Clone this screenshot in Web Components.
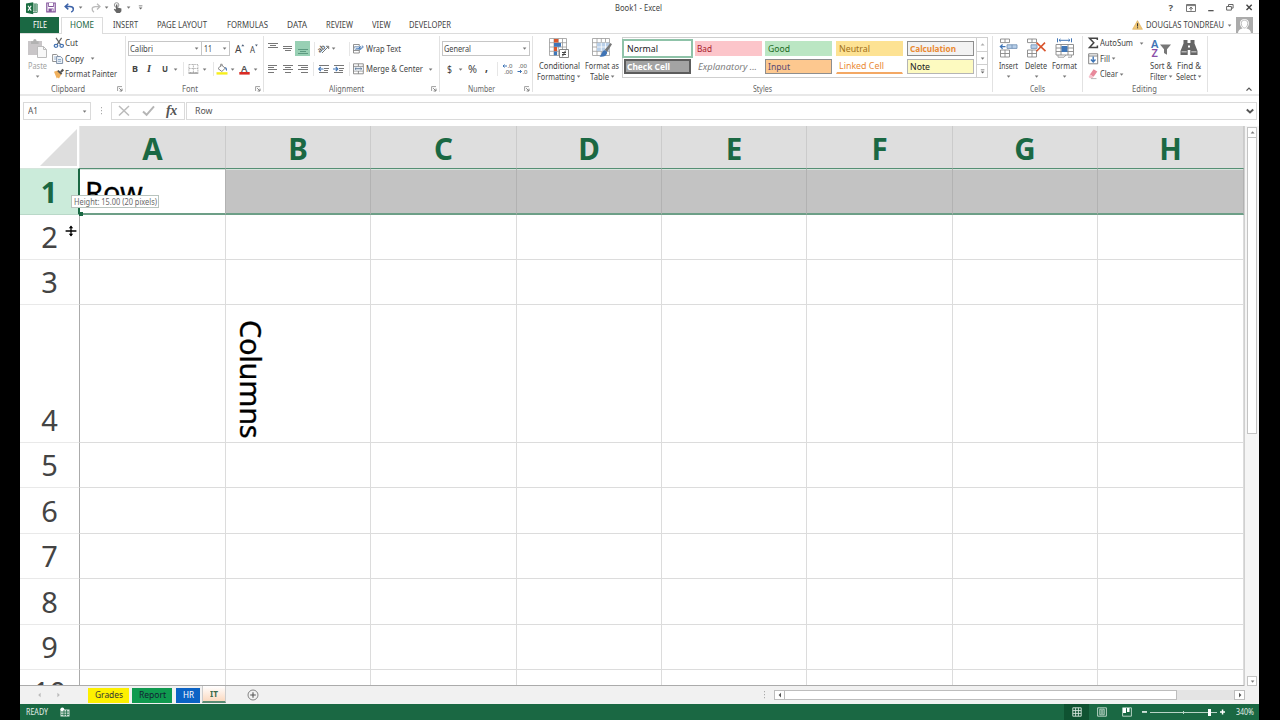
<!DOCTYPE html>
<html lang="en">
<head>
<meta charset="utf-8">
<title>Book1 - Excel</title>
<style>
  html, body { margin: 0; height: 100%; background: #000; overflow: hidden; }
  body { font: 8.4px/10px "Noto Sans", "Open Sans", sans-serif; color: #444; }
</style>
</head>
<body>
<xl-window>
  <xl-titlebar slot="title">Book1 - Excel</xl-titlebar>
  <xl-tabs slot="tabs"></xl-tabs>
  <xl-ribbon slot="ribbon"></xl-ribbon>
  <xl-formula slot="formula"></xl-formula>
  <xl-sheet slot="sheet"></xl-sheet>
  <xl-sheettabs slot="sheettabs"></xl-sheettabs>
  <xl-status slot="status"></xl-status>
</xl-window>

<script>
'use strict'

// small helpers
const define = (name, css, html, ready) => customElements.define(name,
  class extends HTMLElement {
    connectedCallback() {
      if (this.shadowRoot) return
      const t = document.createElement('template')
      t.innerHTML = `<style>* { box-sizing: border-box; } ${css}</style>` + (typeof html === 'function' ? html(this) : html)
      this.attachShadow({mode: 'open'}).appendChild(document.importNode(t.content, true))
      if (ready) ready(this)
    }
  }
)
const ml = (n) => n ? `margin-left:${n}px;` : ''
const icon = (name, left, extra = '') => `<xl-icon name="${name}" style="${ml(left)}${extra}"></xl-icon>`
const label = (text, w, left, extra = '') => `<xl-label w="${w}" style="${ml(left)}${extra}">${text}</xl-label>`
const caret = (left, extra = '') => icon('caret', left, extra)
const sep = (left) => `<xl-sep style="${ml(left)}"></xl-sep>`


// ---- icons: name: [width, height, svg body] ----

const lines = (rows, c = '#777') => rows.map(([x, y, w]) => `<path stroke="${c}" d="M${x} ${y}.5h${w}"/>`).join('')
const tableGrid = `<path fill="#fff" stroke="#999" stroke-width=".8" d="M.5.5h17v17h-17zM.5 4.7h17M.5 9h17M.5 13.3h17M5 .5v17M9.3 .5v17M13.5.5v17"/>`
const icons = {
  caret: [5, 5, '<path fill="#777" d="M.8 1.5h3.6L2.6 3.8z"/>'],
  caretUp: [5, 5, '<path fill="#777" d="M.6 3.5h4L2.6 1.2z"/>'],
  caretBar: [5, 7, '<path fill="#666" d="M.8 1.4h3.6v.8H.8zM.8 3.4h3.6L2.6 5.6z"/>'],
  excel: [12, 12, '<path fill="#fff" stroke="#217346" stroke-width=".8" d="M6 2h5.2v8.4H6z"/><path stroke="#217346" stroke-width=".8" d="M7 4h4M7 6h4M7 8h4M9 2v8"/><path fill="#1b6d42" d="M0 1.4 7.2.2v12L0 10.8z"/><path stroke="#fff" stroke-width="1.1" d="m2 3.8 3.2 4.8M5.2 3.8 2 8.6"/>'],
  save: [10, 11, '<path fill="#fff" stroke="#82539b" stroke-width="1.2" d="M.8 1h8.4v8.8H.8z"/><path fill="#82539b" d="M2.2 1h5.6v4H2.2zM2.5 6.6h5v3.2h-5z"/><path fill="#fff" d="M3 1h4v3H3zM5.8 7.3h1v2h-1z"/>'],
  undo: [11, 10, '<path fill="none" stroke="#3c62a8" stroke-width="1.5" d="M1.200 3.600h4.600c4.600 0 4.400 4 1.400 5.600M4.300.800 1.200 3.600l3.100 2.800"/>'],
  redo: [10, 10, '<path fill="none" stroke="#bbb" stroke-width="1.3" d="M9 3.600H4.500C0 3.600.6 7.600 3 9.200M6 .8l3 2.800-3 2.800"/>'],
  touch: [10, 11, '<circle cx="3.6" cy="3" r="2.3" fill="none" stroke="#999"/><path fill="#666" d="M2.9 2.4h1.5v3.2l4 1v2.6L7 11H3.6L.8 7.6l.8-.8 1.3.8z"/>'],
  help: [8, 10, '<text x="1.500" y="8" font-size="9.500" font-weight="700" fill="#555">?</text>'],
  display: [10, 10, '<path fill="none" stroke="#777" d="M.5 1.5h9v7h-9zM.5 2.6h9"/><path fill="none" stroke="#555" d="M5 7.6V4.4M3.4 5.8 5 4.2l1.6 1.6"/>'],
  min: [8, 10, '<path fill="#555" d="M1.2 7h5.4v1.3H1.2z"/>'],
  restore: [8, 10, '<path fill="#fff" stroke="#666" d="M2.5 1.500h4.600v3.600H2.500z"/><path fill="#fff" stroke="#666" d="M.6 3.500h4.800v3.600H.6z"/>'],
  close: [8, 10, '<path stroke="#444" stroke-width="1.4" d="m1.500 1.800 5.200 5.200M6.700 1.800 1.500 7"/>'],
  warn: [11, 10, '<path fill="#f0c878" stroke="#dba852" stroke-width=".6" d="m5.5.6 4.9 8.7H.6z"/><path fill="#333" d="M5 3.2h1.1v3.3H5zM5 7.2h1.1v1.1H5z"/>'],
  avatar: [17, 17, '<path fill="#ababab" d="M0 0h17v17H0z"/><path fill="#fff" d="M2 17c0-3.6 2-5 4.6-5.4C1.8 6.500 4.300 2 8.500 2s6.700 4.500 1.900 9.600C13 12 15 13.400 15 17z"/><path fill="none" stroke="#bbb" d="M5.200 6.200c0-4 6.600-4 6.600 0 0 3-2 4.800-3.300 4.800S5.200 9.200 5.200 6.200z"/>'],

  paste: [20, 20, '<path fill="#c4c0c3" d="M1 3h14v14H1z"/><path fill="#aaa" d="M4 3.200h2.200C6.200.2 9.600.2 9.600 3.200h2V6H4z"/><path fill="#f8f8f8" stroke="#b5b5b5" d="M10.500 8.500h6l3 3v8h-9z"/><path fill="none" stroke="#b5b5b5" d="M16.500 8.500v3h3"/>'],
  cut: [12, 12, '<path stroke="#666" stroke-width="1.2" d="M3 .8 7.600 7.600M8.600.8 4 7.600"/><g fill="none" stroke="#4472b0" stroke-width="1.2"><ellipse cx="3" cy="8.800" rx="1.800" ry="1.500"/><ellipse cx="8.700" cy="8.800" rx="1.800" ry="1.500"/></g>'],
  copy: [12, 12, '<path fill="#fff" stroke="#888" stroke-width=".9" d="M.6 1.500h4l1.800 1.700v5.300H.6z"/><path fill="#e9f0f7" stroke="#7788a0" stroke-width=".9" d="M4.600 3.500h4l2 2v5h-6z"/><path stroke="#6c8fb8" stroke-width=".7" d="M6 6.500h3M6 8.300h3M2 4h2M2 6h2"/>'],
  painter: [12, 12, '<path fill="#f0b05c" d="m1 3.800 3.400-1.200 4 3.600L6 10.400 4.600 9.600l-.8.9z"/><path fill="#555" d="m4.200 3.200 1.300-1.300 3.800 3.600L8 6.800z"/><path fill="#555" d="m7 3.500 2.400-2.700 1.700 1.400-2.500 2.600z"/>'],
  launcher: [6, 6, '<path fill="none" stroke="#888" stroke-width=".8" d="M.6 5V.6H5"/><path fill="none" stroke="#777" stroke-width=".9" d="m2.200 2.200 2.600 2.600M5 2.600V5H2.600"/>'],

  grow: [11, 12, '<text x="0" y="9.500" font-size="10" fill="#444" textLength="6.500" lengthAdjust="spacingAndGlyphs">A</text><path fill="#4b5d77" d="M6.300 3.200 7.800 1.300l1.500 1.900z"/>'],
  shrink: [10, 12, '<text x="1" y="9.500" font-size="8.500" fill="#444" textLength="5" lengthAdjust="spacingAndGlyphs">A</text><path fill="#4b5d77" d="M6 1.500h2.800L7.400 3.400z"/>'],
  borders: [11, 10, '<path fill="none" stroke="#999" stroke-width=".8" stroke-dasharray="1 .6" d="M.9.500h9v8h-9zM5.400.500v8M.9 4.500h9"/><path stroke="#888" d="M.5 9.200h9.800"/>'],
  fill: [12, 12, '<path fill="#fff" stroke="#777" stroke-width=".9" d="M2 5.500 5.600 2l3.600 3.200-3.400 3.300z"/><path fill="none" stroke="#888" stroke-width=".8" d="M4.600 4V1.200h1.600v2"/><path fill="#4472b0" d="M9 4c2 .4 2.200 2 1.800 4C10 7.500 9.300 6 9 4z"/><path fill="#f7ee1c" d="M.5 9.200h11v2.400H.5z"/>'],
  color: [11, 12, '<text x="2" y="8.600" font-size="9.500" font-weight="600" fill="#555" textLength="7">A</text><path fill="#d92b24" d="M.3 9h10.400v2.600H.3z"/>'],
  topA: [10, 12, lines([[0, 0, 10], [2, 2, 6], [0, 4, 10]])],
  midA: [10, 12, lines([[0, 3, 9], [0, 5, 9], [2, 7, 6]])],
  botA: [10, 12, lines([[0, 6, 10], [2, 8, 6], [0, 10, 10]], '#5c9a80')],
  left: [10, 10, lines([[0, 1, 9], [0, 3, 6], [0, 5, 9], [0, 8, 6]])],
  center: [10, 10, lines([[0, 1, 10], [2, 3, 6], [0, 5, 10], [2, 8, 6]])],
  right: [10, 10, lines([[0, 1, 10], [3, 3, 7], [0, 5, 10], [3, 8, 7]])],
  rotate: [12, 11, '<path stroke="#777" d="m4 10 6.500-6.500M8 3.300h2.700V6"/><text x="-.5" y="7.500" font-size="7" font-weight="600" fill="#555" transform="rotate(-38 4 6)">ab</text>'],
  outdent: [11, 10, lines([[1, 1, 10], [6, 4, 5], [6, 6, 4], [1, 8, 9]]) + '<path fill="none" stroke="#3f74b5" stroke-width="1.200" d="M5.500 5H.8M2.800 2.900.8 5l2 2.100"/>'],
  indent: [11, 10, lines([[1, 1, 10], [6, 4, 5], [6, 6, 4], [1, 8, 9]]) + '<path fill="none" stroke="#3f74b5" stroke-width="1.200" d="M0 5h4.700M2.800 2.900 4.800 5l-2 2.100"/>'],
  wrap: [11, 12, '<path fill="#fff" stroke="#777" stroke-width=".8" d="M.5 1.500h5.800v8.500H.5zM.5 4h5.800M.5 7.500h5.800"/><path fill="#fff" stroke="#7c9cc0" stroke-width=".7" d="M2 3.500h6v3H2z"/><path fill="none" stroke="#3f74b5" d="M3 5.200h5.600c1.800 0 1.700-2.400.3-2.400M7.300 3.700 5.800 5.200l1.500 1.600"/>'],
  merge: [11, 12, '<path fill="#fff" stroke="#777" stroke-width=".8" d="M.5.800h9.800v10H.5zM.5 3.400h9.800M.5 8h9.800M5.400.800v2.600M5.400 8v2.800"/><path fill="#e9eef4" d="M1 3.900h8.800v3.700H1z"/><path stroke="#5b7796" stroke-width=".9" d="M2 5.700h6.800M3.200 4.600 2 5.700l1.200 1.100M7.600 4.600l1.200 1.100-1.200 1.100"/>'],
  decInc: [11, 12, '<path fill="none" stroke="#3f74b5" d="M5 3H1M2.500 1.500 1 3l1.500 1.500"/><g font-size="6" fill="#555"><text x="5.400" y="5.300">.0</text><text x="2.200" y="10.800">.00</text></g>'],
  decDec: [11, 12, '<path fill="none" stroke="#3f74b5" d="M.5 8.500h4M3 7l1.500 1.500L3 10"/><g font-size="6" fill="#555"><text x="1.500" y="5.300">.00</text><text x="5.400" y="10.800">.0</text></g>'],

  cf: [20, 20, tableGrid + '<path fill="#d9552c" d="M5 1h4.300v3.500H5zM5 9h3v4.200H5z"/><path fill="#3e76b8" d="M5 5h7v3.700H5zM5 13.500h3v3.800H5z"/><path fill="#fff" stroke="#777" stroke-width=".9" d="M10.500 11.500h9v8h-9z"/><path stroke="#444" d="M13 14.500h4M13 16.500h4M16.500 12.700l-3 5.600"/>'],
  ft: [20, 20, tableGrid + '<path fill="#b9cfe8" d="M5 4.800h12.400v8.300H5z"/><path stroke="#fff" stroke-width=".8" d="M5 9h12.400M9.300 4.700v8.500M13.500 4.700v8.500"/><path fill="#777" d="m18.500 5 1.500 1.200-4.800 7.500-2.600-1.800z"/><path fill="#3f74b5" d="M12.300 12.200c1.800 0 3 1.200 2.800 3-.8 3-4.600 4.200-7.600 3.300 2-.9 2-5.300 4.800-6.300z"/>'],
  insert: [20, 20, '<path fill="#fff" stroke="#888" stroke-width=".9" d="M2.500 1h9v3.600h-9zM7 1v3.600M2.500 12h9v7h-9zM7 12v7M2.500 15.500h9"/><path fill="#b8d0ea" stroke="#7795b8" stroke-width=".9" d="M9 6.800h10v3.600H9zM14 6.800v3.600"/><path fill="none" stroke="#3f74b5" stroke-width="1.300" d="M7.500 8.600h-5M4.600 6.500 2.400 8.600l2.200 2.100"/>'],
  delete: [20, 20, '<path fill="#fff" stroke="#888" stroke-width=".9" d="M1.500 1h9v3.600h-9zM6 1v3.600M1.500 12h9v7h-9zM6 12v7M1.500 15.500h9"/><path fill="#b8d0ea" stroke="#7795b8" stroke-width=".9" d="M5 6.800h6v3.600H5z"/><path stroke="#d9542c" stroke-width="1.600" d="m10.500 4.600 9 8.600M19 4.600l-8.500 8.600"/>'],
  format: [20, 20, '<path fill="none" stroke="#3f74b5" d="M2.500.300v4M16.500.300v4M4 2.300h11M5.500 1 4 2.300l1.500 1.300M13.500 1 15 2.300l-1.500 1.300"/><path fill="#fff" stroke="#888" stroke-width=".9" d="M1 6.500h17.500V17H1zM1 10h17.500M1 13.500h17.500M6 6.500V17M13 6.500V17"/><path fill="#3e76b8" d="M6.500 8h6v6h-6z"/><path fill="none" stroke="#999" stroke-width=".9" d="M3 17v2.200h6L11 17M13 19.200h3.500V17"/>'],
  sigma: [11, 12, '<path fill="none" stroke="#444" stroke-width="1.500" d="M9.300 3V1.300H1.500L5.800 5.700 1.500 10.400h7.900V8.600"/>'],
  fillDown: [11, 12, '<path fill="#fff" stroke="#777" stroke-width=".9" d="M.7.800h9v10h-9zM.7 3h9"/><path fill="none" stroke="#3f74b5" stroke-width="1.400" d="M5.200 3.600v5.200M2.900 6.500l2.300 2.400 2.300-2.400"/>'],
  clear: [11, 12, '<path fill="#e8899b" d="M5.600 1.200 9.300 3.400 5.600 8.800 1.900 6.600z"/><path fill="#f5c2cc" d="m1.900 6.600 3.700 2.200-1 1.400H1.800L.6 9z"/><path stroke="#999" stroke-width=".7" d="M3 10.600h5.500"/>'],
  sort: [20, 20, '<g font-size="11" font-weight="600"><text x="0" y="9.500" fill="#3f74b5" textLength="7.500">A</text><text x="0.500" y="18.800" fill="#8c4fa8" textLength="6.500">Z</text></g><path fill="#777" d="M9 6.500h11l-4 4.700v5.500l-3-1.600v-3.900z"/>'],
  find: [20, 20, '<path fill="#666" d="M4.500 2h4v3h3V2h4v3.600l3 7.400v4h-7.200v-5h-2.600v5H1.500v-4l3-7.400z"/><path fill="#fff" d="M2.500 13.400h5.200v.900H2.500zM12.300 13.400h5.200v.900h-5.200zM9 7.500h2v2H9z"/>'],
  collapse: [8, 6, '<path fill="none" stroke="#555" stroke-width="1.300" d="m1.500 4.600 2.500-2.500 2.500 2.500"/>'],

  dots: [3, 10, '<path fill="#aaa" d="M1 1h1v1.200H1zM1 4h1v1.200H1zM1 7h1v1.200H1z"/>'],
  cancel: [12, 12, '<path stroke="#bbb" stroke-width="1.500" d="m1 1 10 9.500M11 1 1 10.500"/>'],
  check: [13, 12, '<path fill="none" stroke="#b5b5b5" stroke-width="2" d="m1 6.500 3.600 3.300L12 1.400"/>'],
  chevron: [8, 8, '<path fill="none" stroke="#555" stroke-width="1.900" d="m.8 2.500 3.200 3 3.200-3"/>'],
  resize: [12, 12, '<path stroke="#000" stroke-width="1.500" d="M.6 6h10.800"/><path stroke="#000" stroke-width="1.300" d="M6 1.500v9"/><path fill="#000" d="M3.800 3.200 6 .600l2.200 2.600zM3.800 8.800 6 11.400l2.200-2.600z"/>'],

  prev: [5, 6, '<path fill="#bbb" d="M3.600.800v4.400L1.200 3z"/>'],
  next: [5, 6, '<path fill="#bbb" d="M1.400.800v4.400L3.800 3z"/>'],
  play: [6, 6, '<path fill="#555" d="M2 .800v4.600L4.400 3.100z"/>'],
  back: [6, 6, '<path fill="#555" d="M4 .800v4.600L1.600 3.100z"/>'],
  plus: [12, 12, '<circle cx="6" cy="6" r="5" fill="none" stroke="#777" stroke-width=".9"/><path stroke="#555" stroke-width="1.100" d="M3.200 6h5.600M6 3.200v5.600"/>'],
  macro: [10, 10, '<path fill="#d5e5dc" d="M.5 2.500h9v7h-9z"/><circle cx="2.300" cy="2.300" r="1.900" fill="#fff"/><path stroke="#1a6843" stroke-width=".8" d="M1 5h8M1 7.300h8M4 3v6M6.600 3v6"/>'],
  viewNormal: [10, 10, '<path fill="none" stroke="#d7e6de" stroke-width=".9" d="M.8.800h8.400v8.400H.800zM.8 3.600h8.400M.8 6.400h8.400M3.600.8v8.400M6.400.8v8.400"/>'],
  viewPage: [10, 10, '<path fill="none" stroke="#c6dcd0" stroke-width=".9" d="M.6.800h8.800v8.400H.6zM2.800 2.200h4.400v5.600H2.800zM3.600 3.800h2.800M3.600 5h2.800M3.600 6.200h2.800"/>'],
  viewBreak: [10, 10, '<path fill="none" stroke="#c6dcd0" stroke-width=".9" d="M.6.800h8.800v8.400H.6z"/><path fill="#fff" d="M1 1h3v5H1zM5 1h2.500v4H5z"/>']
}

define('xl-icon', `
  :host { display: block; flex: none; }
  svg { display: block; overflow: visible; font-family: "Noto Sans", sans-serif; }
`, (el) => {
  const [w, h, body] = icons[el.getAttribute('name')]
  return `<svg width="${w}" height="${h}" viewBox="0 0 ${w} ${h}" fill="none">${body}</svg>`
})


// ---- label: squeezes its text to the width given in w ----

define('xl-label', `
  :host { display: block; flex: none; white-space: nowrap; }
  span { display: inline-block; transform-origin: 0 50%; }
`, '<span><slot></slot></span>', (el) => {
  const w = +el.getAttribute('w')
  const span = el.shadowRoot.querySelector('span')
  el.style.width = w + 'px'
  const real = span.getBoundingClientRect().width
  if (real) span.style.transform = `scaleX(${w / real})`
})

define('xl-sep', ':host { display: block; flex: none; width: 1px; height: 14px; background: #e6e6e6; }', '')

define('xl-box', `
  :host { display: flex; flex: none; box-sizing: border-box; align-items: center; justify-content: space-between;
    height: 15px; border: 1px solid #c6c6c6; background: #fff; padding: 0 2px; }
`, '<slot></slot>')


// ---- window ----

define('xl-window', `
  :host { display: grid; width: 1239px; height: 720px; margin-left: 20px; background: #fff; overflow: hidden;
    grid-template-rows: 17px 16px 63px 30px 560px 18px 16px; }
  ::slotted(*) { min-width: 0; min-height: 0; }
`, ['title', 'tabs', 'ribbon', 'formula', 'sheet', 'sheettabs', 'status'].map(n => `<slot name="${n}"></slot>`).join(''))

define('xl-titlebar', `
  :host { display: grid; grid-template-columns: 595px 1fr auto; padding: 0 6px 0 0; }
  div { display: flex; align-items: center; height: 15px; }
`, `
  <div>${icon('excel', 6)}${icon('save', 8)}${icon('undo', 8)}${caret(3)}${icon('redo', 8)}${caret(3)}${icon('touch', 4)}${caret(3)}${icon('caretBar', 7)}</div>
  <div>${label('<slot></slot>', 47, 0, 'margin-top:1px')}</div>
  <div>${icon('help')}${icon('display', 11)}${icon('min', 11)}${icon('restore', 11)}${icon('close', 11)}</div>
`)

define('xl-tabs', `
  :host { display: flex; align-items: stretch; }
  div { display: flex; align-items: center; justify-content: center; }
  .file { width: 39px; background: #1a6843; color: #fff; }
  .home { width: 42px; margin-left: 2px; border: 1px solid #dcdcdc; border-bottom: 0; color: #1a6843; margin-bottom: -1px; padding-bottom: 2px; background: #fff; position: relative; }
  .user { margin-left: auto; padding-right: 6px; }
`, `
  <div class="file">${label('FILE', 14)}</div>
  <div class="home">${label('HOME', 24)}</div>
  <div>${label('INSERT', 25, 10)}${label('PAGE LAYOUT', 50, 19)}${label('FORMULAS', 41, 19.5)}${label('DATA', 20, 19)}${label('REVIEW', 27, 19)}${label('VIEW', 18.5, 19)}${label('DEVELOPER', 42, 19)}</div>
  <div class="user">${icon('warn')}${label('DOUGLAS TONDREAU', 78, 3)}${caret(3)}${icon('avatar', 4)}</div>
`)


// ---- ribbon ----

define('xl-group', `
  :host { display: grid; flex: none; box-sizing: border-box; height: 60px; grid-template-rows: 49px 11px; background: linear-gradient(#e2e2e2, #e2e2e2) right 2px / 1px 56px no-repeat; }
  footer { display: flex; align-items: center; color: #666; }
  footer div { flex: 1; display: flex; justify-content: center; padding-right: 1.5px; }
  footer xl-icon { width: 9px; }
  main { display: flex; min-width: 0; }
`, (el) => `
  <main><slot></slot></main>
  <footer><div>${label(el.getAttribute('label'), el.getAttribute('w'))}</div>${el.hasAttribute('launcher') ? icon('launcher') : ''}</footer>
`)

// tall button: icon above one or two lines of text
define('xl-big', `
  :host { display: flex; flex: none; flex-direction: column; align-items: center; padding-top: 4px; }
  div { display: flex; align-items: center; height: 10.5px; }
  div:first-of-type { margin-top: 3px; }
`, (el) => {
  const [a, aw, b, bw] = el.getAttribute('text').split('|')
  return icon(el.getAttribute('icon')) + `<div>${label(a, aw)}</div><div>${b ? label(b, bw) : ''}${caret(b ? 1 : 0)}</div>`
})

const big = (name, text, w, left = 0, extra = '') => `<xl-big icon="${name}" text="${text}" style="width:${w}px;${ml(left)}${extra}"></xl-big>`

const styleCells = [
  ['Normal', 31, 'background:#fff;color:#222;outline:2px solid #8fc3a9;outline-offset:0'],
  ['Bad', 15, 'background:#fcc5ca;color:#a8202c;padding-left:1px'],
  ['Good', 22, 'background:#bbe6c3;color:#1d6b24'],
  ['Neutral', 31, 'background:#fde293;color:#a2701a'],
  ['Calculation', 46, 'background:#f2f2f2;color:#ea8a34;border-color:#8e8e8e;font-weight:700'],
  ['Check Cell', 43, 'background:#a3a3a3;color:#fff;border:2px solid #5c5c5c;padding-left:1px;font-weight:700'],
  ['Explanatory ...', 59, 'color:#808080;font-style:italic'],
  ['Input', 22, 'background:#fdc88f;color:#5a4a75;border-color:#8e8e8e'],
  ['Linked Cell', 45, 'color:#ea8a34;border-bottom:2px solid #f3a864'],
  ['Note', 20, 'background:#fdfac0;color:#222;border-color:#b5b5b5']
]

define('xl-gallery', `
  :host { display: grid; box-sizing: border-box; grid-template-columns: 1fr 11px; width: 366px; height: 41px; margin-top: 3px; border: 1px solid #cfcfcf; background: #fff; }
  .cells { display: grid; grid-template: repeat(2, 15px) / repeat(5, 67px); gap: 3px 3.7px; padding: 3px 0 0 1px; }
  .cells div { display: flex; align-items: center; border: 1px solid transparent; padding-left: 2px; }
  .scroll { display: grid; grid-template-rows: 1fr 1fr 1fr; border-left: 1px solid #cfcfcf; }
  .scroll div { display: grid; place-items: center; }
  .scroll div + div { border-top: 1px solid #cfcfcf; }
`, `
  <div class="cells">${styleCells.map(([t, w, s]) => `<div style="${s}">${label(t, w)}</div>`).join('')}</div>
  <div class="scroll"><div style="opacity:.6">${icon('caretUp')}</div><div>${caret()}</div><div>${icon('caretBar')}</div></div>
`)

define('xl-ribbon', `
  :host { display: flex; align-items: flex-start; border-top: 1px solid #dcdcdc; border-bottom: 2px solid #e8e8e8; box-sizing: border-box; }
  .rows { padding-top: 1.5px; flex: none; }
  .rows div { display: flex; align-items: center; height: 15.5px; }
  .two { padding-top: 7px; }
  .two div { display: flex; align-items: center; height: 15px; }
  .two div + div { height: 16px; margin-top: 5px; }
  .two span { display: grid; place-items: center; width: 15px; height: 15px; margin-left: 3px; background: #98d0b4; }
`, `
  <xl-group label="Clipboard" w="34" launcher style="width:106px">
    ${big('paste', 'Paste|19', 22, 6, 'color:#999;opacity:.9')}
    <div class="rows" style="margin-left:4px">
      <div>${icon('cut', 1)}${label('Cut', 13, 0)}</div>
      <div>${icon('copy')}${label('Copy', 19, 1)}${caret(6)}</div>
      <div>${icon('painter', 1)}${label('Format Painter', 52, 0)}</div>
    </div>
  </xl-group>

  <xl-group label="Font" w="16" launcher style="width:138px">
    <div class="two" style="margin-left:2px">
      <div>
        <xl-box style="width:74px;padding-left:1px">${label('Calibri', 23)}${caret()}</xl-box>
        <xl-box style="width:29px;margin-left:-1px">${label('11', 8)}${caret()}</xl-box>
        ${icon('grow', 5)}${icon('shrink', 3)}
      </div>
      <div>
        ${label('B', 6, 4, 'font-weight:700')}${label('I', 4, 9, 'font-style:italic;font-weight:600;font-family:Liberation Serif,serif;font-size:10px')}${label('U', 6, 11, 'font-weight:700;text-decoration:underline')}${caret(5)}${sep(5)}
        ${icon('borders', 4)}${caret(3)}${sep(6)}${icon('fill', 2)}${caret(2)}${icon('color', 4)}${caret(3)}
      </div>
    </div>
  </xl-group>

  <xl-group label="Alignment" w="35" launcher style="width:176px">
    <div class="two">
      <div>${icon('topA', 4)}${icon('midA', 5)}<span style="margin-left:2px">${icon('botA')}</span>${sep(4)}${icon('rotate', 3)}${caret(1)}${sep(13)}${icon('wrap', 3)}${label('Wrap Text', 35, 2)}</div>
      <div>${icon('left', 4)}${icon('center', 5)}${icon('right', 5)}${sep(5)}${icon('outdent', 4)}${icon('indent', 4)}${sep(5)}${icon('merge', 3)}${label('Merge &amp; Center', 57, 2)}${caret(5)}</div>
    </div>
  </xl-group>

  <xl-group label="Number" w="27" launcher style="width:93px">
    <div class="two">
      <div><xl-box style="width:88px;margin-left:2px;padding-left:1px">${label('General', 27)}${caret()}</xl-box></div>
      <div>${label('$', 5, 7, 'font-size:11px')}${caret(6)}${label('%', 9, 5, 'font-size:10px')}${label(',', 3, 8, 'font-size:12px;font-weight:700;margin-top:-5px')}${sep(9)}${icon('decInc', 4)}${icon('decDec', 4)}</div>
    </div>
  </xl-group>

  <xl-group label="Styles" w="19" style="width:460px">
    ${big('cf', 'Conditional|41|Formatting|38', 46, 3)}
    ${big('ft', 'Format as|34|Table|19', 38, 1)}
    <xl-gallery style="margin-left:1px"></xl-gallery>
  </xl-group>

  <xl-group label="Cells" w="15" style="width:90px">
    ${big('insert', 'Insert|19', 28, 1)}${big('delete', 'Delete|22', 28)}${big('format', 'Format|25', 29)}
  </xl-group>

  <xl-group label="Editing" w="25" style="width:125px">
    <div class="rows" style="width:59px;margin-left:5px">
      <div>${icon('sigma')}${label('AutoSum', 33, 1)}${caret(6)}</div>
      <div>${icon('fillDown')}${label('Fill', 10, 1)}${caret(1)}</div>
      <div>${icon('clear')}${label('Clear', 18, 1)}${caret(1)}</div>
    </div>
    ${big('sort', 'Sort &amp;|22|Filter|17', 28)}${big('find', 'Find &amp;|24|Select|20', 28)}
  </xl-group>
  ${icon('collapse', 37, 'align-self:flex-end;margin-bottom:2px')}
`)


// ---- formula bar ----

define('xl-formula', `
  :host { display: flex; align-items: flex-start; padding: 6px 0 0 3px; color: #555; box-sizing: border-box; }
  xl-box { height: 18px; border-color: #dadada; }
  em { font: italic 700 14px/14px "Liberation Serif", serif; color: #555; margin-left: 11px; letter-spacing: -.5px; }
`, `
  <xl-box style="width:68px;padding:0 3px 0 4px">${label('A1', 10)}${caret()}</xl-box>
  ${icon('dots', 9, 'margin-top:4px')}
  <xl-box style="width:74px;margin-left:8px;padding:0 5px 0 6px;justify-content:flex-start">${icon('cancel')}${icon('check', 12)}<em>fx</em></xl-box>
  <xl-box style="width:1071px;margin-left:1px;padding:0 2px 0 8px">${label('Row', 17.5)}${icon('chevron')}</xl-box>
`)


// ---- sheet ----

const colWidths = [60, 146, 145, 146, 145, 145, 146, 145, 146]
const rowHeights = [42, 47, 45, 45, 138, 45, 46, 45, 46, 45, 16]
const cellText = (r, c) => r === 1 && c === 0 ? '<div class="row-text">Row</div>' : r === 4 && c === 1 ? '<div class="col-text">Columns</div>' : ''

define('xl-sheet', `
  :host { display: grid; grid-template-columns: 1224px 15px; position: relative; color: #444; }
  .grid { display: grid; grid-template: ${rowHeights.map(h => h + 'px').join(' ')} / ${colWidths.map(w => w + 'px').join(' ')}; border-bottom: 1px solid #ababab; height: 560px; overflow: hidden; }
  .grid > div { min-width: 0; min-height: 0; }
  .corner { display: flex; justify-content: flex-end; padding: 3px 2px 0 0; border-right: 1px solid #e8e8e8; }
  .corner svg { display: block; }
  .col { background: #dedede; border-right: 1px solid #cbcbcb; font: 700 29.5px/45px "Noto Sans", sans-serif; color: #1a6843; text-align: center; }
  .num { border-right: 1px solid #ababab; border-bottom: 1px solid #e9e9e9; display: flex; align-items: flex-end; justify-content: center; font-size: 29px; line-height: 44px; }
  .num.on { background: #cbebda; color: #1a6843; font-weight: 700; border-right: 2px solid #1a6843; border-top: 1px solid #d5e5dc; border-bottom-color: #b9d8c8; }
  .num.last { align-items: flex-start; border-bottom: 0; }
  .cell { border-right: 1px solid #dcdcdc; border-bottom: 1px solid #dcdcdc; }
  .cell.on { background: #c3c3c3; border-right-color: #b2b2b2; border-top: 1px solid #558f74; border-bottom: 2px solid #6d9f87; box-shadow: inset 0 1px #d6e3dc; }
  .cell.first { background: #fff; }
  .row-text { font-size: 29px; line-height: 45px; padding-left: 5px; color: #000; -webkit-text-stroke: .3px #000; }
  .col-text { writing-mode: vertical-rl; font-size: 29px; line-height: 40px; color: #000; padding-top: 15px; margin-left: 5px; letter-spacing: -.25px; -webkit-text-stroke: .3px #000; }
  .tip { position: absolute; left: 51px; top: 69px; width: 88px; height: 13px; display: flex; align-items: center; padding-left: 2px; background: #fff; border: 1px solid #b9c4be; color: #6a6a6a; }
  .handle { position: absolute; left: 59px; top: 86px; width: 4px; height: 4px; background: #1a6843; }
  .bar { display: flex; flex-direction: column; align-items: center; background: #f5f5f5; border-left: 1px solid #d0d0d0; padding-top: 1px; }
  .bar div { width: 10px; border: 1px solid #c4c4c4; background: #fff; display: grid; place-items: center; }
`, `
  <div class="grid">
    <div class="corner"><svg width="37" height="37" viewBox="0 0 37 37"><path fill="#dedede" d="M37 0v37H0z"/></svg></div>
    ${[...'ABCDEFGH'].map(c => `<div class="col">${c}</div>`).join('')}
    ${rowHeights.slice(1).map((_, i) => {
      const r = i + 1
      return `<div class="num${r === 1 ? ' on' : ''}${r === 10 ? ' last' : ''}">${r}</div>` +
        colWidths.slice(1).map((_, c) => `<div class="cell${r === 1 ? ' on' : ''}${r === 1 && !c ? ' first' : ''}">${cellText(r, c)}</div>`).join('')
    }).join('')}
  </div>
  <div class="bar">
    <div style="height:11px">${icon('caretUp')}</div>
    <div style="height:297px;margin-top:-1px"></div>
    <div style="height:10px;margin-top:auto">${caret()}</div>
  </div>
  <div class="handle"></div>
  <div class="tip">${label('Height: 15.00 (20 pixels)', 83)}</div>
  ${icon('resize', 0, 'position:absolute;left:45px;top:99px')}
`)


// ---- sheet tabs and horizontal scroll ----

define('xl-sheettabs', `
  :host { display: flex; align-items: center; background: #f1f1f1; }
  .tab { display: flex; align-items: center; justify-content: center; height: 15px; color: #333; }
  .it { height: 17px; align-self: flex-start; border: 1px solid #ccc; border-top: 0; border-bottom: 2px solid #5a8c74; padding-top: 1px; background: linear-gradient(#fff, #fbd9c0); font-weight: 700; color: #3b6a4a; }
  .scroll { display: flex; margin-left: auto; margin-right: 14px; background: #e4e4e4; }
  .scroll div { height: 10px; border: 1px solid #bdbdbd; background: #fff; display: grid; place-items: center; }
`, `
  ${icon('prev', 17)}${icon('next', 14)}
  <div class="tab" style="width:41px;margin-left:27px;background:#fdf000">${label('Grades', 28)}</div>
  <div class="tab" style="width:40px;margin-left:3px;background:#0f9a4f;color:#123">${label('Report', 27)}</div>
  <div class="tab" style="width:24px;margin-left:4px;background:#0b63c5;color:#fff">${label('HR', 11)}</div>
  <div class="tab it" style="width:24px;margin-left:2px">${label('IT', 8)}</div>
  ${icon('plus', 21)}
  ${icon('dots', 504)}
  <div class="scroll">
    <div style="width:11px">${icon('back')}</div>
    <div style="width:393px;margin-left:-1px"></div>
    <div style="width:11px;margin-left:57px">${icon('play')}</div>
  </div>
`)

define('xl-status', `
  :host { display: flex; align-items: center; background: #1a6843; color: #e6f0ea; font-size: 8px; }
  .view { display: grid; place-items: center; width: 25px; height: 16px; }
  .on { background: #0f5231; }
  .track { display: flex; align-items: center; justify-content: space-between; width: 67px; height: 1px; margin: 0 3px; background: #b9d3c6; }
  .track i { width: 3px; height: 7px; margin-left: auto; margin-right: 6px; background: #fff; }
  .track b { width: 1px; height: 3px; margin-left: 33px; background: #b9d3c6; }
`, `
  ${label('READY', 22, 5.5)}${icon('macro', 12)}
  <div class="view on" style="margin-left:auto">${icon('viewNormal')}</div>
  <div class="view">${icon('viewPage')}</div>
  <div class="view">${icon('viewBreak')}</div>
  <svg width="5" height="6" style="margin-left:3px"><path fill="#fff" d="M0 2.200h5v1.500H0z"/></svg>
  <div class="track"><b></b><i></i></div>
  <svg width="5" height="6"><path fill="#fff" d="M0 2.200h5v1.500H0zM1.800.500h1.500v5H1.800z"/></svg>
  ${label('340%', 18, 10.5, 'margin-right:5.5px')}
`)
</script>
</body>
</html>
